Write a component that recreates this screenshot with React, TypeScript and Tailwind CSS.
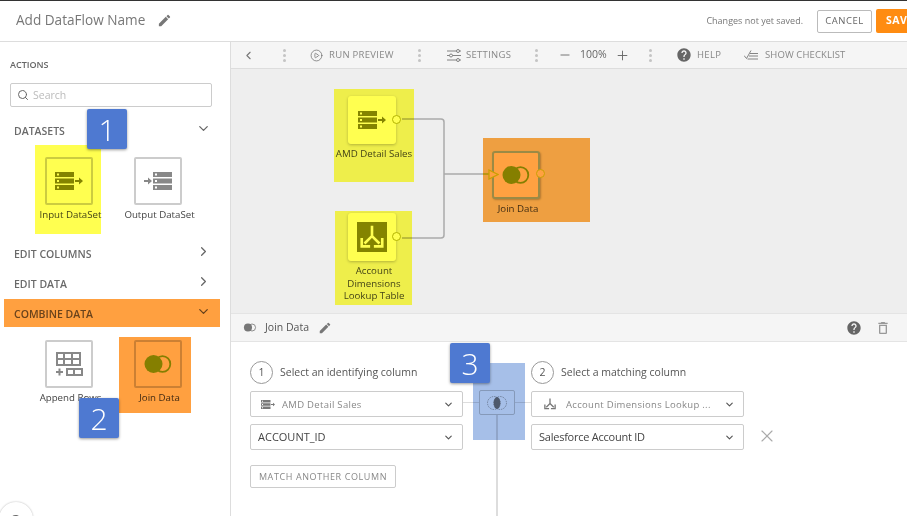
import { ChevronDown, ChevronLeft, ChevronRight, CirclePlay, Minus, Plus, Search, X } from 'lucide-react';
import { MdDeleteOutline, MdEdit, MdHelp } from 'react-icons/md';

function DatasetIcon({ out = false, className = '' }: { out?: boolean; className?: string }) {
  const bx = out ? 9 : 0;
  return (
    <svg viewBox="0 0 28 18" className={className} fill="currentColor">
      {[0, 6.5, 13].map(y => (
        <g key={y}>
          <rect x={bx} y={y} width="19" height="5" />
          <rect x={bx + 2} y={y + 1.5} width="2" height="2" fill="#fff" />
        </g>
      ))}
      {out ? (
        <path d="M0 8h4V5.500L8 9l-4 3.500V10H0z" />
      ) : (
        <path d="M20 8h4V5.500L28 9l-4 3.500V10h-4z" />
      )}
    </svg>
  );
}

function JoinIcon({ className = '' }: { className?: string }) {
  return (
    <svg viewBox="0 0 28 20" className={className}>
      <circle cx="18.500" cy="10" r="7.800" fill="none" stroke="currentColor" strokeWidth="1.800" />
      <circle cx="9.500" cy="10" r="9" fill="currentColor" />
    </svg>
  );
}

function SplitIcon({ className = '' }: { className?: string }) {
  return (
    <svg viewBox="0 0 30 30" className={className} fill="none" stroke="currentColor" strokeWidth="2.800">
      <path d="M15 3v11L7 22M15 14l8 8" />
      <path d="M4 16v9h9M26 16v9h-9" />
    </svg>
  );
}

function AppendIcon() {
  return (
    <svg viewBox="0 0 28 24" className="h-[24px] w-[28px] text-[#888]" fill="currentColor">
      <path fillRule="evenodd" d="M1 0h25v14H1zM3 2v4h5V2zm7 0v4h6V2zm8 0v4h6V2zM3 8v4h5V8zm7 0v4h6V8zm8 0v4h6V8z" />
      <path fillRule="evenodd" d="M11 16h17v8H11zm2 2v4h5v-4zm7 0v4h6v-4z" />
      <path d="M1 19h2.500v-2.500h2V19H8v2H5.500v2.500h-2V21H1z" />
    </svg>
  );
}

function SettingsIcon() {
  return (
    <svg viewBox="0 0 14 13" className="h-[13px] w-[14px] text-[#777]" fill="none" stroke="currentColor" strokeWidth="0.900">
      <path d="M0 2h9.500M12.500 2H14M0 6.500h2.500M5.500 6.500H14M0 11h9.500M12.500 11H14" />
      <circle cx="11" cy="2" r="1.500" />
      <circle cx="4" cy="6.500" r="1.500" />
      <circle cx="11" cy="11" r="1.500" />
    </svg>
  );
}

function ChecklistIcon() {
  return (
    <svg viewBox="0 0 14 10" className="h-[10px] w-[14px] text-[#777]" fill="none" stroke="currentColor" strokeWidth="0.900">
      <path d="M0 5.500l2.500 3L7 .5M6 3.500h8M5 6h9M3.500 9H14" />
    </svg>
  );
}

function Dots({ className = '' }: { className?: string }) {
  return (
    <span className={`flex w-[3px] shrink-0 flex-col gap-[2px] ${className}`}>
      <i className="h-[3px] w-[3px] rounded-full bg-[#c4c4c4]" />
      <i className="h-[3px] w-[3px] rounded-full bg-[#c4c4c4]" />
      <i className="h-[3px] w-[3px] rounded-full bg-[#c4c4c4]" />
    </span>
  );
}

function Tile({ label, children }: { label: string; children: React.ReactNode }) {
  return (
    <div className="flex w-[89px] flex-col items-center">
      <div className="flex h-[48px] w-[48px] items-center justify-center rounded-[2px] border-2 border-[#ccc] bg-white">
        {children}
      </div>
      <span className="mt-[3px] whitespace-nowrap pl-[4px] text-[9.700px] leading-[13px] text-[#444]">{label}</span>
    </div>
  );
}

function SectionRow({ label, open = false, className = '' }: { label: string; open?: boolean; className?: string }) {
  return (
    <div className={`flex h-[30px] items-center justify-between pl-[14px] pr-[19px] ${className}`}>
      <span className="translate-y-[1px] text-[10.500px] font-semibold text-[#6a6a6a]">{label}</span>
      {open ? (
        <ChevronDown size={15} className="-translate-y-[3px] text-[#666]" />
      ) : (
        <ChevronRight size={15} className="-translate-y-[3px] text-[#666]" />
      )}
    </div>
  );
}

function Sidebar() {
  return (
    <aside className="flex w-[231px] shrink-0 flex-col border-r border-[#ddd]">
      <div className="mt-[17px] px-[10px] text-[9px] font-semibold leading-[12px] text-[#666]">ACTIONS</div>
      <div className="mx-[10px] mt-[12px] flex h-[24px] w-[202px] items-center rounded-[2px] border border-[#ccc] pl-[6px]">
        <Search size={12} className="text-[#666]" />
        <span className="ml-[4px] translate-y-[1px] text-[10.500px] text-[#bbb]">Search</span>
      </div>
      <SectionRow label="DATASETS" open className="mt-[9px]" />
      <div className="ml-[24px] mt-[11px] flex">
        <Tile label="Input DataSet"><DatasetIcon className="h-[18px] w-[28px] text-[#848400]" /></Tile>
        <Tile label="Output DataSet"><DatasetIcon out className="h-[18px] w-[28px] text-[#888]" /></Tile>
      </div>
      <SectionRow label="EDIT COLUMNS" className="mt-[18px]" />
      <SectionRow label="EDIT DATA" />
      <SectionRow label="COMBINE DATA" open />
      <div className="ml-[24px] mt-[11px] flex">
        <Tile label="Append Rows"><AppendIcon /></Tile>
        <Tile label="Join Data"><JoinIcon className="h-[20px] w-[28px] text-[#85ca00]" /></Tile>
      </div>
    </aside>
  );
}

function Toolbar() {
  return (
    <div className="flex h-[27px] shrink-0 items-center border-b border-[#ddd] bg-[#f5f5f5] text-[9.500px] tracking-[0.3px] text-[#888]">
      <ChevronLeft size={13} className="ml-[11px] shrink-0 text-[#777]" />
      <Dots className="ml-[28px]" />
      <CirclePlay size={13} strokeWidth={1.300} className="ml-[24px] shrink-0 text-[#666]" />
      <span className="ml-[6px] w-[65px] shrink-0 whitespace-nowrap">RUN PREVIEW</span>
      <Dots className="ml-[24px]" />
      <span className="ml-[26px] shrink-0"><SettingsIcon /></span>
      <span className="ml-[5px] w-[44px] shrink-0 whitespace-nowrap">SETTINGS</span>
      <Dots className="ml-[25px]" />
      <Minus size={14} strokeWidth={1.500} className="ml-[20px] shrink-0 text-[#666]" />
      <span className="ml-[8px] w-[27px] shrink-0 whitespace-nowrap text-[10.500px] tracking-normal text-[#666]">100%</span>
      <Plus size={15} strokeWidth={1.500} className="ml-[8px] shrink-0 text-[#666]" />
      <Dots className="ml-[19px]" />
      <MdHelp size={16} className="ml-[24px] shrink-0 text-[#666]" />
      <span className="ml-[5px] w-[23px] shrink-0">HELP</span>
      <span className="ml-[24px] shrink-0"><ChecklistIcon /></span>
      <span className="ml-[7px] shrink-0 whitespace-nowrap tracking-[0.1px]">SHOW CHECKLIST</span>
    </div>
  );
}

function Node({ left, top, label, children, className = '', portClass = 'left-[43.500px] top-[18.500px] border-[#b4b400]' }: { left: number; top: number; label: string; children: React.ReactNode; className?: string; portClass?: string }) {
  return (
    <div className="absolute w-[80px]" style={{ left, top }}>
      <div className={`relative mx-auto flex h-[48px] w-[48px] items-center justify-center rounded-[3px] bg-white shadow-[0_1px_3px_rgba(0,0,0,0.25)] ${className}`}>
        {children}
        <span className={`absolute h-[9px] w-[9px] rounded-full border bg-white ${portClass}`} />
      </div>
      <div className="ml-[2px] mt-[4px] w-[80px] text-center text-[9.700px] leading-[12.500px] text-[#444]">{label}</div>
    </div>
  );
}

function Canvas() {
  return (
    <div className="relative h-[244px] shrink-0 bg-[#eee]">
      <svg className="absolute left-0 top-0 h-full w-full" fill="none" stroke="#aaa" strokeWidth="1.500">
        <path d="M171 50h39a3 3 0 0 1 3 3v113a3 3 0 0 1-3 3h-39" />
        <path d="M213 105h39" />
        <path d="M252 105h8" stroke="#a8d800" />
      </svg>
      <Node left={101} top={27} label="AMD Detail Sales">
        <DatasetIcon className="h-[18px] w-[28px] text-[#848400]" />
      </Node>
      <Node left={101} top={144} label="Account Dimensions Lookup Table">
        <span className="flex h-[30px] w-[30px] items-center justify-center bg-[#848400] text-white">
          <SplitIcon className="h-[28px] w-[28px]" />
        </span>
      </Node>
      <Node
        left={245}
        top={82}
        label="Join Data"
        className="border-2 border-[#9bceff] !bg-[#fff0f0] shadow-[1px_1px_2px_rgba(0,0,0,0.25)]"
        portClass="left-[41.500px] top-[15.500px] border-[#c9ef00] !bg-[#fff0f0]"
      >
        <JoinIcon className="h-[20px] w-[28px] text-[#85bd00]" />
        <svg viewBox="0 0 11 11" className="absolute -left-[6px] top-[15.500px] z-10 h-[11px] w-[11px]" fill="#ffa040" stroke="#c9a000" strokeWidth="1.300">
          <path d="M1 1l9 4.500-9 4.500z" />
        </svg>
      </Node>
    </div>
  );
}

function Select({ text, icon, muted = false, textClass = '' }: { text: string; icon?: React.ReactNode; muted?: boolean; textClass?: string }) {
  return (
    <div className="flex h-[26px] w-[213px] items-center rounded-[2px] border border-[#ccc] bg-white pr-[8px]">
      {icon}
      <span className={`flex-1 truncate ${muted ? 'translate-y-[1px] text-[9.500px] tracking-[0.3px] text-[#888]' : 'pl-[7px] text-[11px] text-[#444]'} ${textClass}`}>{text}</span>
      <ChevronDown size={11} strokeWidth={2.500} className="text-[#555]" />
    </div>
  );
}

function StepHeader({ n, text }: { n: number; text: string }) {
  return (
    <div className="flex h-[23px] items-center">
      <span className="flex h-[23px] w-[23px] items-center justify-center rounded-full border border-[#999] text-[10.500px] text-[#555]">{n}</span>
      <span className="ml-[7px] whitespace-nowrap text-[10.500px] text-[#555]">{text}</span>
    </div>
  );
}

function JoinPanel() {
  return (
    <div className="flex min-h-0 flex-1 flex-col bg-white">
      <div className="flex h-[29px] shrink-0 items-center border-y border-[#e4e4e4] bg-[#f5f5f5] pl-[12px] pr-[16px]">
        <JoinIcon className="h-[9px] w-[14px] text-[#777]" />
        <span className="ml-[8px] text-[10.500px] text-[#555]">Join Data</span>
        <MdEdit size={14} className="ml-[9px] text-[#777]" />
        <MdHelp size={16} className="ml-auto text-[#666]" />
        <MdDeleteOutline size={16} className="ml-[13px] text-[#999]" />
      </div>
      <div className="relative flex flex-1 pl-[19px] pt-[19px]">
        <div className="flex w-[213px] flex-col">
          <StepHeader n={1} text="Select an identifying column" />
          <div className="mt-[7px]">
            <Select muted text="AMD Detail Sales" icon={<DatasetIcon className="ml-[10px] mr-[7px] h-[9px] w-[14px] shrink-0 text-[#777]" />} />
          </div>
          <div className="mt-[7px]"><Select text="ACCOUNT_ID" /></div>
          <div className="mt-[15px] flex h-[23px] w-[146px] items-center justify-center rounded-[2px] border border-[#ccc] text-[9px] tracking-[0.6px] text-[#888]">
            MATCH ANOTHER COLUMN
          </div>
        </div>
        <div className="flex w-[68px] flex-col items-center pt-[29px]">
          <div className="flex w-full items-center">
            <span className="h-px flex-1 bg-[#ddd]" />
            <span className="flex h-[25px] w-[36px] items-center justify-center rounded-[2px] border border-[#ccc] bg-white">
              <svg viewBox="0 0 20 14" className="h-[14px] w-[20px]">
                <circle cx="7" cy="7" r="6.500" fill="none" stroke="#999" strokeWidth="0.800" strokeDasharray="1.500 1" />
                <circle cx="13" cy="7" r="6.500" fill="none" stroke="#999" strokeWidth="0.800" strokeDasharray="1.500 1" />
                <ellipse cx="10" cy="7" rx="3.300" ry="6" fill="#777" />
              </svg>
            </span>
            <span className="h-px flex-1 bg-[#ddd]" />
          </div>
          <span className="w-[2px] flex-1 bg-[#ddd]" />
        </div>
        <div className="flex w-[213px] flex-col">
          <StepHeader n={2} text="Select a matching column" />
          <div className="mt-[7px]">
            <Select muted text="Account Dimensions Lookup ..." icon={<SplitIcon className="ml-[11px] mr-[9px] h-[14px] w-[14px] shrink-0 text-[#777]" />} />
          </div>
          <div className="mt-[7px]"><Select text="Salesforce Account ID" textClass="tracking-[-0.24px]" /></div>
        </div>
        <X size={20} strokeWidth={1.400} className="ml-[13px] mt-[65px] text-[#aaa]" />
      </div>
    </div>
  );
}

function Badge({ n, className }: { n: number; className: string }) {
  return (
    <div className={`absolute flex h-[40px] w-[40px] items-center justify-center rounded-[2px] bg-[#4e79d1] text-[30px] font-light text-white shadow-[0_1px_3px_rgba(0,0,0,0.4)] ${className}`}>
      {n}
    </div>
  );
}

export default function App() {
  return (
    <div className="relative flex h-[516px] w-[907px] flex-col overflow-hidden border-t border-[#333] bg-white font-['Open_Sans',sans-serif]">
      <header className="flex h-[41px] shrink-0 items-center border-b border-[#ddd] pl-[16px]">
        <span className="-mt-[2px] text-[13.600px] text-[#777]">Add DataFlow Name</span>
        <MdEdit size={15} className="ml-[12px] -mt-[2px] text-[#777]" />
        <span className="ml-auto text-[9px] text-[#777]">Changes not yet saved.</span>
        <span className="ml-[14px] flex h-[23px] w-[55px] items-center justify-center rounded-[2px] border border-[#bbb] text-[9.500px] tracking-[0.5px] text-[#666]">CANCEL</span>
        <span className="ml-[4px] -mr-[20px] flex h-[24px] w-[51px] items-center rounded-[2px] bg-[#ff8c12] pl-[10px] text-[10.500px] font-bold tracking-[0.5px] text-white">SAVE</span>
      </header>
      <div className="flex min-h-0 flex-1">
        <Sidebar />
        <main className="flex min-w-0 flex-1 flex-col">
          <Toolbar />
          <Canvas />
          <JoinPanel />
        </main>
      </div>

      {/* highlighter marks laid over the screenshot */}
      <div className="absolute left-[35px] top-[144px] h-[89px] w-[66px] bg-[#ffff50] mix-blend-multiply" />
      <div className="absolute left-[4px] top-[298px] h-[28px] w-[216px] bg-[#ffa040] mix-blend-multiply" />
      <div className="absolute left-[119px] top-[336px] h-[76px] w-[72px] bg-[#ffa040] mix-blend-multiply" />
      <div className="absolute left-[334px] top-[88px] h-[93px] w-[80px] bg-[#ffff50] mix-blend-multiply" />
      <div className="absolute left-[335px] top-[210px] h-[94px] w-[77px] bg-[#ffff50] mix-blend-multiply" />
      <div className="absolute left-[483px] top-[137px] h-[84px] w-[107px] bg-[#ffab45] mix-blend-multiply" />
      <div className="absolute left-[473px] top-[362px] h-[77px] w-[52px] bg-[#a6bfe8] mix-blend-multiply" />

      <Badge n={1} className="left-[87px] top-[108px]" />
      <Badge n={2} className="left-[79px] top-[397px]" />
      <Badge n={3} className="left-[450px] top-[342px]" />

      <div className="absolute -left-[1px] top-[501px] flex h-[38px] w-[34px] justify-center rounded-full bg-white pt-[6px] text-[15px] font-bold text-[#666] shadow-[0_0_2px_rgba(0,0,0,0.3)]">?</div>
    </div>
  );
}
